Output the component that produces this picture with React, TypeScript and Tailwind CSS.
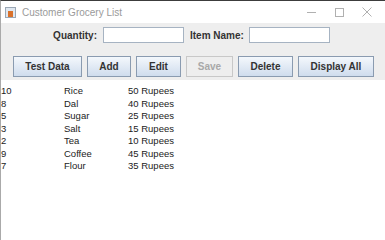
const rows = [
  ["10", "Rice", "50 Rupees"],
  ["8", "Dal", "40 Rupees"],
  ["5", "Sugar", "25 Rupees"],
  ["3", "Salt", "15 Rupees"],
  ["2", "Tea", "10 Rupees"],
  ["9", "Coffee", "45 Rupees"],
  ["7", "Flour", "35 Rupees"],
];

function Btn({ label, w, disabled }: { label: string; w: string; disabled?: boolean }) {
  return (
    <button
      className={
        disabled
          ? `${w} h-[21px] border border-[#c8c8c8] bg-[#eeeeee] text-[10px] font-bold text-[#a8a8a8]`
          : `${w} h-[21px] border border-[#8a9bb0] bg-gradient-to-b from-[#f4f8fc] to-[#cfdced] text-[10px] font-bold text-[#333]`
      }
    >
      {label}
    </button>
  );
}

export default function App() {
  return (
    <div className="w-[385px] h-[240px] flex flex-col bg-white border-t border-l border-t-[#3c3c3c] border-l-[#aaaaaa] overflow-hidden font-['Liberation_Sans',Arial,sans-serif]">
      <div className="h-[22px] shrink-0 flex items-center">
        <div className="ml-[4px] w-[11px] h-[11px] border border-[#9aa7b5] bg-[#dfe7f0] flex items-end justify-center">
          <div className="w-[5px] h-[6px] bg-[#d9722c]" />
        </div>
        <span className="ml-[6px] text-[10px] text-[#9a9a9a]">Customer Grocery List</span>
        <div className="ml-auto flex items-center">
          <div className="w-[9px] h-px bg-[#b0b0b0] mr-[19px]" />
          <div className="w-[9px] h-[9px] border border-[#b0b0b0] mr-[18px]" />
          <svg width="10" height="10" viewBox="0 0 10 10" className="mr-[13px]">
            <path d="M0.5 0.5 L9.5 9.5 M9.5 0.5 L0.5 9.5" stroke="#b0b0b0" strokeWidth="1" />
          </svg>
        </div>
      </div>
      <div className="bg-[#eeeeee] h-[57px] shrink-0 flex flex-col pt-[4px]">
        <div className="flex items-center h-[16px]">
          <span className="w-[96px] text-right text-[10px] font-bold text-[#333]">Quantity:</span>
          <div className="ml-[6px] w-[81px] h-[16px] bg-white border border-[#a6b3c2]" />
          <span className="ml-[6px] text-[10px] font-bold text-[#333]">Item Name:</span>
          <div className="ml-[5px] w-[81px] h-[16px] bg-white border border-[#a6b3c2]" />
        </div>
        <div className="flex items-center gap-[5px] ml-[12px] mt-[13px]">
          <Btn label="Test Data" w="w-[69px]" />
          <Btn label="Add" w="w-[44px]" />
          <Btn label="Edit" w="w-[45px]" />
          <Btn label="Save" w="w-[47px]" disabled />
          <Btn label="Delete" w="w-[55px]" />
          <Btn label="Display All" w="w-[76px]" />
        </div>
      </div>
      <div className="flex-1 pt-[5px] text-[9.5px] text-[#222]">
        {rows.map((r) => (
          <div key={r[1]} className="flex h-[12.5px] leading-[12.5px]">
            <span className="w-[63px]">{r[0]}</span>
            <span className="w-[64px]">{r[1]}</span>
            <span>{r[2]}</span>
          </div>
        ))}
      </div>
    </div>
  );
}
